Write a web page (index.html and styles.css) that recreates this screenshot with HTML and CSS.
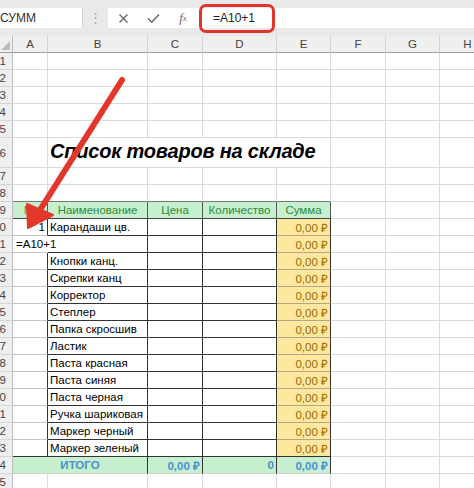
FILE: index.html
```html
<!DOCTYPE html>
<html lang="ru">
<head>
<meta charset="utf-8">
<title>Список товаров на складе</title>
<link rel="stylesheet" href="styles.css">
</head>
<body>
<div class="app">
  <div class="toolbar">
    <div class="namebox">СУММ</div>
    <div class="grip">⋮</div>
    <div class="fx-field">
      <span class="fbtn"><svg width="11" height="11" viewBox="0 0 11 11"><path d="M1.5 1.5 L9.5 9.5 M9.5 1.5 L1.5 9.5" stroke="#6a6a6a" stroke-width="1.4" fill="none"/></svg></span>
      <span class="fbtn"><svg width="13" height="11" viewBox="0 0 13 11"><path d="M1 5.5 L4.8 9.2 L12 1.5" stroke="#6a6a6a" stroke-width="1.6" fill="none"/></svg></span>
      <span class="fbtn fxlabel"><i>f</i><sub>x</sub></span>
      <div class="formula"><span class="formula-text">=A10+1</span><span class="highlight"></span></div>
    </div>
  </div>

  <div class="sheet">
    <div class="corner"><span class="tri"></span></div>
    <div class="ch">A</div><div class="ch">B</div><div class="ch">C</div><div class="ch">D</div><div class="ch">E</div><div class="ch">F</div><div class="ch">G</div><div class="ch">H</div>

    <div class="rh">1</div><div class="c"></div><div class="c"></div><div class="c"></div><div class="c"></div><div class="c"></div><div class="c"></div><div class="c"></div><div class="c"></div>
    <div class="rh">2</div><div class="c"></div><div class="c"></div><div class="c"></div><div class="c"></div><div class="c"></div><div class="c"></div><div class="c"></div><div class="c"></div>
    <div class="rh">3</div><div class="c"></div><div class="c"></div><div class="c"></div><div class="c"></div><div class="c"></div><div class="c"></div><div class="c"></div><div class="c"></div>
    <div class="rh">4</div><div class="c"></div><div class="c"></div><div class="c"></div><div class="c"></div><div class="c"></div><div class="c"></div><div class="c"></div><div class="c"></div>
    <div class="rh">5</div><div class="c"></div><div class="c"></div><div class="c"></div><div class="c"></div><div class="c"></div><div class="c"></div><div class="c"></div><div class="c"></div>
    <div class="rh">6</div><div class="c"></div><div class="c title">Список товаров на складе</div><div class="c"></div><div class="c"></div><div class="c"></div>
    <div class="rh">7</div><div class="c"></div><div class="c"></div><div class="c"></div><div class="c"></div><div class="c"></div><div class="c"></div><div class="c"></div><div class="c"></div>
    <div class="rh">8</div><div class="c top"></div><div class="c top"></div><div class="c top"></div><div class="c top"></div><div class="c top"></div><div class="c"></div><div class="c"></div><div class="c"></div>

    <div class="rh">9</div><div class="c g ctr">№</div><div class="c g ctr">Наименование</div><div class="c g ctr">Цена</div><div class="c g ctr">Количество</div><div class="c g ctr">Сумма</div><div class="c"></div><div class="c"></div><div class="c"></div>

    <div class="rh">10</div><div class="c a num">1</div><div class="c d">Карандаши цв.</div><div class="c d"></div><div class="c d"></div><div class="c y">0,00 ₽</div><div class="c"></div><div class="c"></div><div class="c"></div>
    <div class="rh">11</div><div class="c edit">=A10+1</div><div class="c d"></div><div class="c d"></div><div class="c d"></div><div class="c y">0,00 ₽</div><div class="c"></div><div class="c"></div><div class="c"></div>
    <div class="rh">12</div><div class="c a"></div><div class="c d">Кнопки канц.</div><div class="c d"></div><div class="c d"></div><div class="c y">0,00 ₽</div><div class="c"></div><div class="c"></div><div class="c"></div>
    <div class="rh">13</div><div class="c a"></div><div class="c d">Скрепки канц</div><div class="c d"></div><div class="c d"></div><div class="c y">0,00 ₽</div><div class="c"></div><div class="c"></div><div class="c"></div>
    <div class="rh">14</div><div class="c a"></div><div class="c d">Корректор</div><div class="c d"></div><div class="c d"></div><div class="c y">0,00 ₽</div><div class="c"></div><div class="c"></div><div class="c"></div>
    <div class="rh">15</div><div class="c a"></div><div class="c d">Степлер</div><div class="c d"></div><div class="c d"></div><div class="c y">0,00 ₽</div><div class="c"></div><div class="c"></div><div class="c"></div>
    <div class="rh">16</div><div class="c a"></div><div class="c d">Папка скросшив</div><div class="c d"></div><div class="c d"></div><div class="c y">0,00 ₽</div><div class="c"></div><div class="c"></div><div class="c"></div>
    <div class="rh">17</div><div class="c a"></div><div class="c d">Ластик</div><div class="c d"></div><div class="c d"></div><div class="c y">0,00 ₽</div><div class="c"></div><div class="c"></div><div class="c"></div>
    <div class="rh">18</div><div class="c a"></div><div class="c d">Паста красная</div><div class="c d"></div><div class="c d"></div><div class="c y">0,00 ₽</div><div class="c"></div><div class="c"></div><div class="c"></div>
    <div class="rh">19</div><div class="c a"></div><div class="c d">Паста синяя</div><div class="c d"></div><div class="c d"></div><div class="c y">0,00 ₽</div><div class="c"></div><div class="c"></div><div class="c"></div>
    <div class="rh">20</div><div class="c a"></div><div class="c d">Паста черная</div><div class="c d"></div><div class="c d"></div><div class="c y">0,00 ₽</div><div class="c"></div><div class="c"></div><div class="c"></div>
    <div class="rh">21</div><div class="c a"></div><div class="c d">Ручка шариковая</div><div class="c d"></div><div class="c d"></div><div class="c y">0,00 ₽</div><div class="c"></div><div class="c"></div><div class="c"></div>
    <div class="rh">22</div><div class="c a"></div><div class="c d">Маркер черный</div><div class="c d"></div><div class="c d"></div><div class="c y">0,00 ₽</div><div class="c"></div><div class="c"></div><div class="c"></div>
    <div class="rh">23</div><div class="c a last"></div><div class="c d">Маркер зеленый</div><div class="c d"></div><div class="c d"></div><div class="c y last">0,00 ₽</div><div class="c"></div><div class="c"></div><div class="c"></div>

    <div class="rh">24</div><div class="c t ctr span2">ИТОГО</div><div class="c t num">0,00 ₽</div><div class="c t num">0</div><div class="c t num">0,00 ₽</div><div class="c"></div><div class="c"></div><div class="c"></div>
    <div class="rh">25</div><div class="c"></div><div class="c"></div><div class="c"></div><div class="c"></div><div class="c"></div><div class="c"></div><div class="c"></div><div class="c"></div>
  </div>

  <svg class="arrow" width="474" height="488" viewBox="0 0 474 488">
    <line x1="122" y1="80" x2="40" y2="210" stroke="#e4372c" stroke-width="6" stroke-linecap="round"/>
    <polygon points="28,228 27,204 53,215" fill="#e4372c" stroke="#e4372c" stroke-width="2" stroke-linejoin="round"/>
  </svg>
</div>
</body>
</html>
```

FILE: styles.css
```css
html, body {
  margin: 0;
  padding: 0;
  overflow: hidden;
  background: #ffffff;
}

.app {
  position: relative;
  width: 474px;
  height: 488px;
  overflow: hidden;
  font-family: "Liberation Sans", Arial, sans-serif;
  color: #000;
}

/* ---------- formula toolbar ---------- */
.toolbar {
  height: 36px;
  display: flex;
  align-items: center;
  background: #e9e9e9;
}

.namebox {
  width: 83px;
  height: 20px;
  box-sizing: border-box;
  background: #fff;
  border-right: 1px solid #d2d2d2;
  font-size: 12px;
  line-height: 20px;
  color: #333;
  overflow: hidden;
  white-space: nowrap;
}

.grip {
  width: 25px;
  text-align: center;
  color: #a8a8a8;
  font-size: 13px;
  line-height: 20px;
}

.fx-field {
  flex: 1;
  height: 20px;
  display: flex;
  align-items: center;
  background: #fff;
}

.fbtn {
  width: 30px;
  height: 20px;
  display: flex;
  align-items: center;
  justify-content: center;
}

.fxlabel {
  font-family: "Liberation Serif", "Times New Roman", serif;
  font-size: 13px;
  color: #6a6a6a;
}

.fxlabel sub {
  font-size: 9px;
  font-style: italic;
  vertical-align: -2px;
}

.formula {
  position: relative;
  flex: 1;
  height: 20px;
  display: flex;
  align-items: center;
  padding-left: 15px;
}

.formula-text {
  font-size: 12px;
  color: #222;
}

.highlight {
  position: absolute;
  left: 1px;
  top: -4px;
  width: 76px;
  height: 29px;
  box-sizing: border-box;
  border: 3.5px solid #e0352b;
  border-radius: 7px;
}

/* ---------- sheet grid ---------- */
.sheet {
  display: grid;
  grid-template-columns: 13px 35px 100px 55px 74px 54px 55px 54px 56px;
  grid-template-rows: 17px repeat(5, 17px) 30px repeat(19, 17px);
  font-size: 11.5px;
}

.sheet > div {
  box-sizing: border-box;
  min-width: 0;
}

.corner {
  position: relative;
  background: #efefef;
  border-right: 1px solid #bdbdbd;
  border-bottom: 1px solid #9e9e9e;
}

.tri {
  position: absolute;
  right: 2px;
  bottom: 2px;
  width: 0;
  height: 0;
  border-left: 9px solid transparent;
  border-bottom: 9px solid #bdbdbd;
}

.ch {
  background: #efefef;
  border-right: 1px solid #d3d3d3;
  border-bottom: 1px solid #9e9e9e;
  display: flex;
  align-items: center;
  justify-content: center;
  color: #444;
  font-size: 11.5px;
}

.rh {
  background: #efefef;
  border-right: 1px solid #bdbdbd;
  border-bottom: 1px solid #d6d6d6;
  display: flex;
  align-items: center;
  justify-content: flex-end;
  padding-right: 6px;
  overflow: hidden;
  color: #444;
  font-size: 11.5px;
  white-space: nowrap;
}

.c {
  border-right: 1px solid #dadada;
  border-bottom: 1px solid #dadada;
  display: flex;
  align-items: center;
  padding: 0 2px;
  white-space: nowrap;
  background: #fff;
}

.title {
  grid-column: span 4;
  align-items: flex-end;
  padding-bottom: 4px;
  font-size: 20px;
  letter-spacing: -0.2px;
  font-weight: bold;
  font-style: italic;
  background: transparent;
  border-right-color: #dadada;
}

.top {
  border-bottom-color: #777;
}

.ctr {
  justify-content: center;
}

.num {
  justify-content: flex-end;
}

.g {
  background: #c6efce;
  color: #2f8a3c;
  border-right-color: #555;
  border-bottom-color: #444;
}

.a {
  border-right-color: #333;
  border-bottom-color: #c4c4c4;
}

.a.last {
  border-bottom-color: #333;
}

.edit {
  overflow: visible;
  position: relative;
  z-index: 1;
  border-right-color: transparent;
  border-bottom-color: #c4c4c4;
  background: transparent;
  padding-left: 3px;
}

.d {
  border-right-color: #333;
  border-bottom-color: #333;
}

.y {
  background: #fee8a0;
  color: #9c6a00;
  justify-content: flex-end;
  border-right-color: #333;
  border-bottom-color: #b3a680;
}

.y.last {
  border-bottom-color: #333;
}

.t {
  background: #c6efce;
  color: #4a8fd0;
  font-weight: bold;
  border-right-color: #333;
  border-bottom-color: #cfcfcf;
}

.span2 {
  grid-column: span 2;
}

/* ---------- annotation arrow ---------- */
.arrow {
  position: absolute;
  left: 0;
  top: 0;
  pointer-events: none;
}
```
